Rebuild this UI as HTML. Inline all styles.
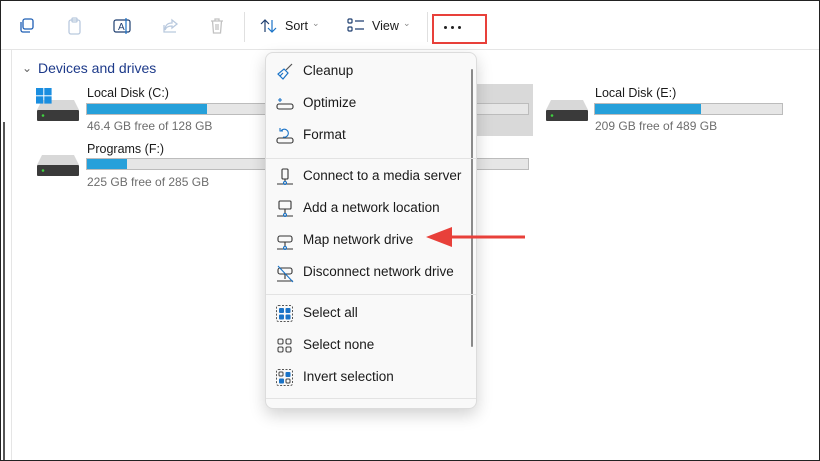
<!DOCTYPE html>
<html><head><meta charset="utf-8"><style>
*{margin:0;padding:0;box-sizing:border-box}
body{width:820px;height:461px;overflow:hidden;background:#fff;font-family:"Segoe UI","Liberation Sans",sans-serif;color:#1a1a1a;position:relative}
.frame{position:absolute;left:0;top:0;width:820px;height:461px;border:1px solid #222;pointer-events:none;z-index:20}
.a{position:absolute}
.t{position:absolute;font-size:12.5px;white-space:nowrap}
.bar{position:absolute;height:12px;background:#e6e6e6;border:1px solid #bcbcbc}
.bar i{display:block;height:100%;background:#26a0da}
.sub{position:absolute;font-size:12px;color:#6d6d6d;white-space:nowrap}
.menu{position:absolute;left:265px;top:52px;width:212px;height:357px;background:#f9f9f9;border:1px solid #dcdcdc;border-radius:8px;box-shadow:0 6px 16px rgba(0,0,0,.18);z-index:5}
.mi{position:absolute;left:37px;font-size:13.5px;color:#1a1a1a;white-space:nowrap}
.sep{position:absolute;left:0;width:210px;height:1px;background:#e3e3e3}
.ic{position:absolute;left:10px}
</style></head><body>
<div class="frame"></div>
<div class="a" style="left:0;top:49px;width:820px;height:1px;background:#e5e5e5"></div>
<svg class="a" style="left:18px;top:17px" width="18" height="18" viewBox="0 0 18 18" fill="none" stroke="#1f5fb5" stroke-width="1.3"><rect x="5" y="2" width="10" height="10" rx="2"/><path d="M3 5v8a2 2 0 0 0 2 2h7"/></svg>
<svg class="a" style="left:66px;top:16px" width="18" height="20" viewBox="0 0 18 20" fill="none" stroke="#b9c9de" stroke-width="1.3"><rect x="3" y="4" width="11" height="14" rx="2"/><rect x="6" y="2" width="5" height="4" rx="1"/></svg>
<svg class="a" style="left:112px;top:16px" width="20" height="20" viewBox="0 0 20 20" fill="none" stroke="#1f3f70" stroke-width="1.2"><rect x="2" y="4" width="16" height="12" rx="2"/><text x="6" y="14" font-size="10" fill="#1f3f70" stroke="none" font-family="Liberation Sans">A</text><path d="M14 2v16" stroke="#1a73c7"/></svg>
<svg class="a" style="left:162px;top:17px" width="18" height="18" viewBox="0 0 18 18" fill="none" stroke="#b9c9de" stroke-width="1.3"><path d="M10 3l5 4-5 4V9c-4 0-6 1-7 4 0-4 2-7 7-7z"/><path d="M2 8v7h12"/></svg>
<svg class="a" style="left:209px;top:17px" width="16" height="18" viewBox="0 0 16 18" fill="none" stroke="#c2c2c2" stroke-width="1.3"><path d="M2 4h12M6 4V2h4v2M3.5 4l1 12h7l1-12M7 7v6M9 7v6"/></svg>
<div class="a" style="left:244px;top:12px;width:1px;height:30px;background:#e0e0e0"></div>
<svg class="a" style="left:260px;top:18px" width="18" height="16" viewBox="0 0 18 16" fill="none" stroke="#1f3f70" stroke-width="1.2"><path d="M5 14V2M1 6l4-4 4 4"/><path d="M12 2v12M8 10l4 4 4-4" stroke="#1a73c7"/></svg>
<div class="t" style="left:285px;top:19px;font-size:12.5px">Sort</div>
<div class="t" style="left:312px;top:18px;font-size:9px;color:#888">⌄</div>
<svg class="a" style="left:347px;top:18px" width="18" height="14" viewBox="0 0 18 14" fill="none" stroke="#1f3f70" stroke-width="1.2"><rect x="1" y="1" width="4" height="4" rx="1"/><rect x="1" y="9" width="4" height="4" rx="1"/><path d="M8 3h9M8 11h9"/></svg>
<div class="t" style="left:372px;top:19px">View</div>
<div class="t" style="left:403px;top:18px;font-size:9px;color:#888">⌄</div>
<div class="a" style="left:427px;top:12px;width:1px;height:30px;background:#e0e0e0"></div>
<div class="a" style="left:432px;top:14px;width:55px;height:30px;border:2px solid #e8403a"></div>
<div class="a" style="left:444px;top:26px;width:3px;height:3px;background:#222;border-radius:50%;box-shadow:7px 0 #222,14px 0 #222"></div>
<div class="a" style="left:3px;top:122px;width:2px;height:339px;background:#555"></div>
<div class="a" style="left:11px;top:50px;width:1px;height:411px;background:#e5e5e5"></div>
<div class="t" style="left:22px;top:61px;font-size:12px;color:#666">⌄</div>
<div class="t" style="left:38px;top:60px;font-size:14px;color:#1d3a8a">Devices and drives</div>
<svg class="a" style="left:36px;top:100px" width="44" height="22" viewBox="0 0 44 22"><path d="M6 0h32l5 10H1z" fill="#d8d8d8"/><rect x="1" y="10" width="42" height="11" rx="1" fill="#3a3a3a"/><circle cx="7" cy="15.5" r="1.3" fill="#3fd13f"/></svg>
<svg class="a" style="left:36px;top:88px;z-index:2" width="16" height="16" viewBox="0 0 16 16"><rect x="0" y="0" width="7.3" height="7.3" fill="#1a8ee0"/><rect x="8.3" y="0" width="7.3" height="7.3" fill="#1a8ee0"/><rect x="0" y="8.3" width="7.3" height="7.3" fill="#1a8ee0"/><rect x="8.3" y="8.3" width="7.3" height="7.3" fill="#1a8ee0"/></svg>
<div class="t" style="left:87px;top:86px">Local Disk (C:)</div>
<div class="bar" style="left:86px;top:103px;width:190px"><i style="width:120px"></i></div>
<div class="sub" style="left:87px;top:119px">46.4 GB free of 128 GB</div>
<svg class="a" style="left:36px;top:155px" width="44" height="22" viewBox="0 0 44 22"><path d="M6 0h32l5 10H1z" fill="#d8d8d8"/><rect x="1" y="10" width="42" height="11" rx="1" fill="#3a3a3a"/><circle cx="7" cy="15.5" r="1.3" fill="#3fd13f"/></svg>
<div class="t" style="left:87px;top:142px">Programs (F:)</div>
<div class="bar" style="left:86px;top:158px;width:190px"><i style="width:40px"></i></div>
<div class="sub" style="left:87px;top:175px">225 GB free of 285 GB</div>
<div class="a" style="left:470px;top:84px;width:63px;height:52px;background:#d9d9d9"></div>
<div class="bar" style="left:470px;top:103px;width:59px"></div>
<div class="bar" style="left:470px;top:158px;width:59px"></div>
<svg class="a" style="left:545px;top:100px" width="44" height="22" viewBox="0 0 44 22"><path d="M6 0h32l5 10H1z" fill="#d8d8d8"/><rect x="1" y="10" width="42" height="11" rx="1" fill="#3a3a3a"/><circle cx="7" cy="15.5" r="1.3" fill="#3fd13f"/></svg>
<div class="t" style="left:595px;top:86px">Local Disk (E:)</div>
<div class="bar" style="left:594px;top:103px;width:189px"><i style="width:106px"></i></div>
<div class="sub" style="left:595px;top:119px">209 GB free of 489 GB</div>
<div class="menu">
<div class="a" style="left:205px;top:16px;width:2px;height:278px;background:#8a8a8a;border-radius:1px"></div>
<svg class="ic" style="top:10px" width="18" height="18" viewBox="0 0 18 18" fill="none" stroke="#1a73c7" stroke-width="1.2"><path d="M16 1l-6 6" stroke="#555"/><path d="M8 6l4 4-5 6-5-5z"/><path d="M4 13l3-3"/></svg>
<div class="mi" style="top:10px">Cleanup</div>
<svg class="ic" style="top:43px" width="18" height="16" viewBox="0 0 18 16" fill="none" stroke="#333" stroke-width="1.1"><rect x="1" y="8" width="16" height="5" rx="2"/><path d="M4 2v4M2 4h4" stroke="#1a73c7"/></svg>
<div class="mi" style="top:42px">Optimize</div>
<svg class="ic" style="top:74px" width="18" height="18" viewBox="0 0 18 18" fill="none" stroke="#333" stroke-width="1.1"><rect x="1" y="11" width="16" height="5" rx="2"/><path d="M5 4a4 4 0 1 1 2 6" stroke="#1a73c7"/><path d="M4 1v3h3" stroke="#1a73c7"/></svg>
<div class="mi" style="top:74px">Format</div>
<div class="sep" style="top:105px"></div>
<svg class="ic" style="top:115px" width="18" height="18" viewBox="0 0 18 18" fill="none" stroke="#333" stroke-width="1.1"><rect x="6" y="1" width="6" height="10" rx="1"/><path d="M1 16h16M9 11v3" /><circle cx="9" cy="15" r="1.5" stroke="#1a73c7"/></svg>
<div class="mi" style="top:115px">Connect to a media server</div>
<svg class="ic" style="top:147px" width="18" height="18" viewBox="0 0 18 18" fill="none" stroke="#333" stroke-width="1.1"><rect x="3" y="1" width="12" height="8" rx="1"/><path d="M1 16h16M9 9v5"/><circle cx="9" cy="15" r="1.5" stroke="#1a73c7"/></svg>
<div class="mi" style="top:147px">Add a network location</div>
<svg class="ic" style="top:180px" width="18" height="18" viewBox="0 0 18 18" fill="none" stroke="#333" stroke-width="1.1"><rect x="2" y="3" width="14" height="6" rx="2"/><path d="M1 16h16M9 9v5"/><circle cx="9" cy="15" r="1.5" stroke="#1a73c7"/></svg>
<div class="mi" style="top:179px">Map network drive</div>
<svg class="ic" style="top:212px" width="18" height="18" viewBox="0 0 18 18" fill="none" stroke="#333" stroke-width="1.1"><rect x="2" y="3" width="14" height="6" rx="2"/><path d="M1 16h16M9 9v5"/><path d="M2 1l15 16" stroke="#1a73c7"/></svg>
<div class="mi" style="top:211px">Disconnect network drive</div>
<div class="sep" style="top:241px"></div>
<svg class="ic" style="top:252px" width="17" height="17" viewBox="0 0 17 17"><rect x=".5" y=".5" width="16" height="16" rx="2" fill="none" stroke="#555" stroke-dasharray="2 1.5"/><rect x="3" y="3" width="5" height="5" rx="1" fill="#1a73c7"/><rect x="9.5" y="3" width="5" height="5" rx="1" fill="#1a73c7"/><rect x="3" y="9.5" width="5" height="5" rx="1" fill="#1a73c7"/><rect x="9.5" y="9.5" width="5" height="5" rx="1" fill="#1a73c7"/></svg>
<div class="mi" style="top:252px">Select all</div>
<svg class="ic" style="top:284px" width="17" height="17" viewBox="0 0 17 17" fill="none" stroke="#444" stroke-width="1.1"><rect x="2" y="2" width="5" height="5" rx="1.5"/><rect x="10" y="2" width="5" height="5" rx="1.5"/><rect x="2" y="10" width="5" height="5" rx="1.5"/><rect x="10" y="10" width="5" height="5" rx="1.5"/></svg>
<div class="mi" style="top:284px">Select none</div>
<svg class="ic" style="top:316px" width="17" height="17" viewBox="0 0 17 17"><rect x=".5" y=".5" width="16" height="16" rx="2" fill="none" stroke="#555" stroke-dasharray="2 1.5"/><rect x="3" y="3" width="4" height="4" rx="1" fill="none" stroke="#444"/><rect x="9.5" y="3" width="5" height="5" rx="1" fill="#1a73c7"/><rect x="3" y="9.5" width="5" height="5" rx="1" fill="#1a73c7"/><rect x="10" y="10" width="4" height="4" rx="1" fill="none" stroke="#444"/></svg>
<div class="mi" style="top:316px">Invert selection</div>
<div class="sep" style="top:345px"></div>
</div>
<svg class="a" style="left:420px;top:224px;z-index:6" width="110" height="26" viewBox="0 0 110 26"><path d="M26 13H105" stroke="#e8403a" stroke-width="3"/><path d="M6 13L32 3V23z" fill="#e8403a"/></svg>
</body></html>
